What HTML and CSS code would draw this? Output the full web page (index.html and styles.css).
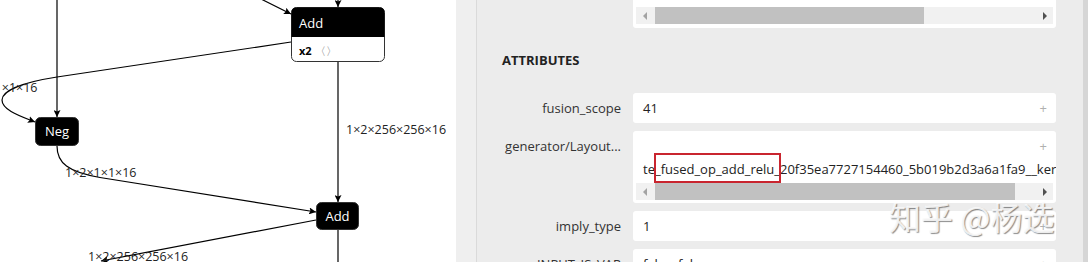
FILE: index.html
```html
<!DOCTYPE html>
<html lang="en">
<head>
  <meta charset="UTF-8">
  <meta name="viewport" content="width=device-width, initial-scale=1.0">
  <title>Netron</title>
  <link rel="stylesheet" href="styles.css">
</head>
<body>
  <div class="app">
    <div class="graph">
      <svg width="456" height="262" viewBox="0 0 456 262">
        <defs>
          <marker id="arrow" viewBox="0 0 10 10" refX="10" refY="5" markerWidth="7" markerHeight="7" orient="auto" markerUnits="userSpaceOnUse">
            <path d="M0,0 L10,5 L0,10 L2,5 z" fill="#000" />
          </marker>
        </defs>

        <g class="edges">
          <path d="M257,-3 L291,14" marker-end="url(#arrow)" />
          <path d="M338,-3 L338,7" marker-end="url(#arrow)" />
          <path d="M57,-3 L57,117" marker-end="url(#arrow)" />
          <path d="M291,42 L57,77 C25,82 2,90 2,100 C2,110 20,116 35,122" marker-end="url(#arrow)" />
          <path d="M57,146 C57,163 68,172 100,177.5 L316,212" marker-end="url(#arrow)" />
          <path d="M338,62 L338,202" marker-end="url(#arrow)" />
          <path d="M316,220 L101,261" marker-end="url(#arrow)" />
          <path d="M338,230 L338,265" />
        </g>

        <g class="edge-labels">
          <text x="-34" y="92">1×2×1×1×16</text>
          <text x="65" y="177">1×2×1×1×16</text>
          <text x="346" y="134">1×2×256×256×16</text>
          <text x="88" y="261">1×2×256×256×16</text>
        </g>

        <g class="node">
          <rect class="node-body" x="291.5" y="7.5" width="93" height="54" rx="5" />
          <path class="node-head" d="M291.5,37 L291.5,12.5 Q291.5,7.5 296.5,7.5 L379.5,7.5 Q384.5,7.5 384.5,12.5 L384.5,37 Z" />
          <text class="node-title" x="299" y="28">Add</text>
          <text class="node-attr" x="299" y="55">x2</text>
          <text class="node-shape" x="315" y="55">〈〉</text>
        </g>

        <g class="node">
          <rect class="node-dark" x="35.5" y="117.5" width="43" height="28" rx="5" />
          <text class="node-title" x="57" y="136" text-anchor="middle">Neg</text>
        </g>

        <g class="node">
          <rect class="node-dark" x="316.5" y="202.5" width="42" height="27" rx="5" />
          <text class="node-title" x="337.5" y="221" text-anchor="middle">Add</text>
        </g>
      </svg>
    </div>

    <div class="sidebar">
      <div class="sidebar-gutter"></div>
      <div class="sidebar-content">
        <div class="item">
          <div class="item-name"></div>
          <div class="item-value item-value-top">
            <div class="scrollbar">
              <div class="scroll-btn scroll-left"></div>
              <div class="scroll-track"><div class="scroll-thumb" style="width: 269px"></div></div>
              <div class="scroll-btn scroll-right"></div>
            </div>
          </div>
        </div>

        <div class="section-title">ATTRIBUTES</div>

        <div class="item">
          <div class="item-name">fusion_scope</div>
          <div class="item-value">
            <span class="expander">+</span>
            <div class="value-line">41</div>
          </div>
        </div>

        <div class="item">
          <div class="item-name">generator/Layout...</div>
          <div class="item-value item-value-scroll">
            <div class="expander-line">+</div>
            <div class="value-line value-long">te<span class="highlight">_fused_op_add_relu_</span>20f35ea7727154460_5b019b2d3a6a1fa9__kernel_0</div>
            <div class="scrollbar scrollbar-inner">
              <div class="scroll-btn scroll-left"></div>
              <div class="scroll-track"><div class="scroll-thumb" style="width: 360px"></div></div>
              <div class="scroll-btn scroll-right"></div>
            </div>
          </div>
        </div>

        <div class="item">
          <div class="item-name">imply_type</div>
          <div class="item-value">
            <span class="expander">+</span>
            <div class="value-line">1</div>
          </div>
        </div>

        <div class="item">
          <div class="item-name">INPUT_IS_VAR</div>
          <div class="item-value">
            <span class="expander">+</span>
            <div class="value-line">false, false</div>
          </div>
        </div>
      </div>
      <div class="sidebar-scroll"></div>
    </div>

    <div class="watermark">知乎 @杨选</div>
  </div>
</body>
</html>
```

FILE: styles.css
```css
* {
  margin: 0;
  padding: 0;
  box-sizing: border-box;
}

body {
  width: 1088px;
  height: 262px;
  overflow: hidden;
  background: #fff;
  font-family: "Open Sans", "Noto Sans", sans-serif;
  color: #333;
}

.app {
  position: relative;
  display: flex;
  height: 262px;
  overflow: hidden;
}

/* graph canvas */
.graph {
  width: 456px;
  flex: none;
  overflow: hidden;
  background: #fff;
}

.graph svg {
  display: block;
  overflow: hidden;
}

.edges path {
  fill: none;
  stroke: #000;
  stroke-width: 1.2;
}

.edge-labels text {
  font-size: 12.5px;
  fill: #222;
}

.node-body {
  fill: #fff;
  stroke: #333;
  stroke-width: 1;
}

.node-head {
  fill: #000;
}

.node-dark {
  fill: #000;
  stroke: #333;
}

.node-title {
  font-size: 13px;
  fill: #fff;
}

.node-attr {
  font-size: 11px;
  font-weight: 700;
  fill: #000;
}

.node-shape {
  font-size: 11px;
  fill: #777;
  font-family: "DejaVu Sans", sans-serif;
}

/* sidebar */
.sidebar {
  flex: 1;
  min-width: 0;
  display: flex;
  background: #ececec;
}

.sidebar-gutter {
  width: 21px;
  flex: none;
  background: #efefef;
  border-right: 1px solid #dadada;
}

.sidebar-content {
  flex: 1;
  min-width: 0;
  padding-right: 27px;
}

.sidebar-scroll {
  width: 5px;
  flex: none;
  background: #d6d6d6;
}

.section-title {
  margin: 23px 0 24px;
  padding-left: 25px;
  font-size: 13px;
  font-weight: 700;
  line-height: 18px;
  color: #222;
}

.item {
  display: flex;
  margin-bottom: 8px;
}

.item-name {
  width: 144px;
  flex: none;
  margin-right: 12px;
  padding-top: 7px;
  font-size: 13px;
  line-height: 16px;
  text-align: right;
  white-space: nowrap;
}

.item-value {
  flex: 1;
  min-width: 0;
  overflow: hidden;
  padding: 7px 9px 7px 10px;
  background: #fff;
  border-radius: 3px;
  font-size: 13px;
  line-height: 16px;
  color: #222;
}

.item-value-top {
  height: 28px;
  padding: 7px 3px 4px;
  border-radius: 0 0 3px 3px;
}

.item-value-scroll {
  padding-bottom: 3px;
}

.expander {
  float: right;
  color: #b0b0b0;
  font-size: 13px;
}

.expander-line {
  height: 16px;
  text-align: right;
  color: #b0b0b0;
}

.value-line {
  white-space: nowrap;
}

.value-long {
  margin-top: 7px;
}

.highlight {
  position: relative;
}

.highlight::after {
  content: "";
  position: absolute;
  left: -1px;
  right: -1px;
  top: -7px;
  bottom: -5px;
  border: 2px solid #c9252f;
}

/* fake horizontal scrollbar */
.scrollbar {
  display: flex;
  height: 17px;
  background: #f1f1f1;
}

.scrollbar-inner {
  margin: 6px -6px 0 -7px;
}

.scroll-btn {
  width: 17px;
  flex: none;
  display: flex;
  align-items: center;
  justify-content: center;
}

.scroll-btn::before {
  content: "";
  border-style: solid;
}

.scroll-left::before {
  border-width: 4px 4px 4px 0;
  border-color: transparent #a3a3a3 transparent transparent;
}

.scroll-right::before {
  border-width: 4px 0 4px 4px;
  border-color: transparent transparent transparent #505050;
}

.scroll-track {
  flex: 1;
  min-width: 0;
  padding-left: 2px;
}

.scroll-thumb {
  height: 100%;
  background: #c1c1c1;
}

.watermark {
  position: absolute;
  left: 889px;
  top: 196px;
  font-family: "Noto Sans CJK SC", sans-serif;
  font-size: 32px;
  line-height: 40px;
  color: rgba(250, 250, 250, 0.9);
  text-shadow: 1px 1px 1px rgba(0, 0, 0, 0.45);
  white-space: nowrap;
}
```
